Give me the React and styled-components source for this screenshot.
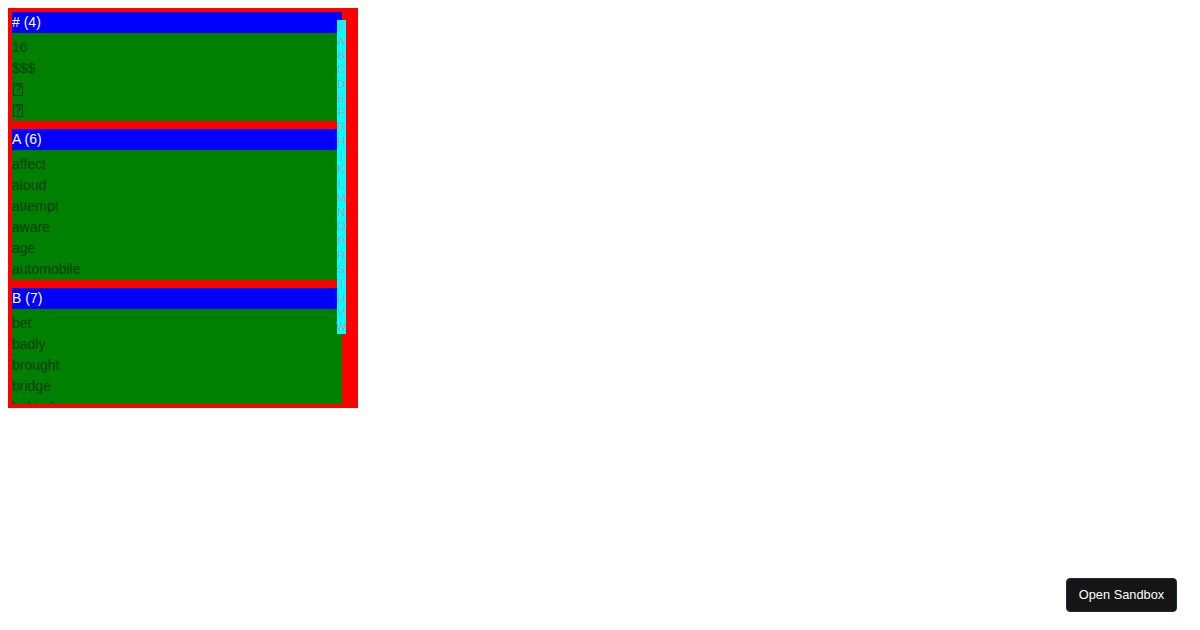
import styled, { createGlobalStyle } from "styled-components"

const sections = [
  { title: "#", words: ["16", "$$$"], missing: 2 },
  { title: "A", words: ["affect", "aloud", "attempt", "aware", "age", "automobile"], missing: 0 },
  { title: "B", words: ["bet", "badly", "brought", "bridge", "behind", "bread", "book"], missing: 0 },
]

const letters = "#ABCDEFGHIKLMNOPRSTUVW".split("")

const GlobalStyle = createGlobalStyle`
  body {
    font-family: "Liberation Sans", Arial, sans-serif;
    font-size: 14px;
    line-height: 1.5;
    background: #fff;
  }
`

const Container = styled.div`
  position: relative;
  box-sizing: border-box;
  width: 350px;
  height: 400px;
  padding: 4px 16px 4px 4px;
  background: red;
`

const Scroller = styled.div`
  height: 100%;
  overflow: hidden;
`

const Section = styled.section`
  margin-bottom: 8px;
  background: green;
`

const SectionHeader = styled.div`
  height: 21px;
  color: #fff;
  background: blue;
`

const WordList = styled.ul`
  margin: 0;
  padding: 4px 0 0;
  list-style: none;
`

const Word = styled.li`
  display: flex;
  align-items: center;
  height: 21px;
  color: #000;
  opacity: 0.55;
  white-space: nowrap;
`

// the box a browser draws for a character it has no glyph for
const MissingGlyph = styled.span`
  box-sizing: border-box;
  width: 10px;
  height: 13px;
  margin-left: 1px;
  border: 1px solid #000;
  font-size: 12px;
  line-height: 11px;
  text-align: center;
`

const LetterIndex = styled.ul`
  position: absolute;
  top: 12px;
  left: 329px;
  display: flex;
  flex-direction: column;
  align-items: center;
  width: 9px;
  height: 314px;
  margin: 0;
  padding: 0;
  list-style: none;
  background: cyan;
`

const IndexLetter = styled.li`
  flex: 1;
  display: flex;
  align-items: center;
  font-size: 11px;
  line-height: 1;
  color: #a0a4c0;
`

const SandboxButton = styled.button`
  position: fixed;
  right: 23px;
  bottom: 18px;
  width: 111px;
  height: 34px;
  padding: 0 0 2px;
  font-family: "Liberation Sans", Arial, sans-serif;
  font-size: 12.8px;
  color: #fff;
  background: #151515;
  border: 1px solid #1c2c40;
  border-radius: 4px;
`

export default function App() {
  return (
    <>
      <GlobalStyle />
      <Container>
        <Scroller>
          {sections.map((section) => (
            <Section key={section.title}>
              <SectionHeader>
                {section.title} ({section.words.length + section.missing})
              </SectionHeader>
              <WordList>
                {section.words.map((word) => (
                  <Word key={word}>{word}</Word>
                ))}
                {Array.from({ length: section.missing }, (_, i) => (
                  <Word key={i}>
                    <MissingGlyph>?</MissingGlyph>
                  </Word>
                ))}
              </WordList>
            </Section>
          ))}
        </Scroller>
        <LetterIndex>
          {letters.map((letter) => (
            <IndexLetter key={letter}>{letter}</IndexLetter>
          ))}
        </LetterIndex>
      </Container>
      <SandboxButton>Open Sandbox</SandboxButton>
    </>
  )
}
